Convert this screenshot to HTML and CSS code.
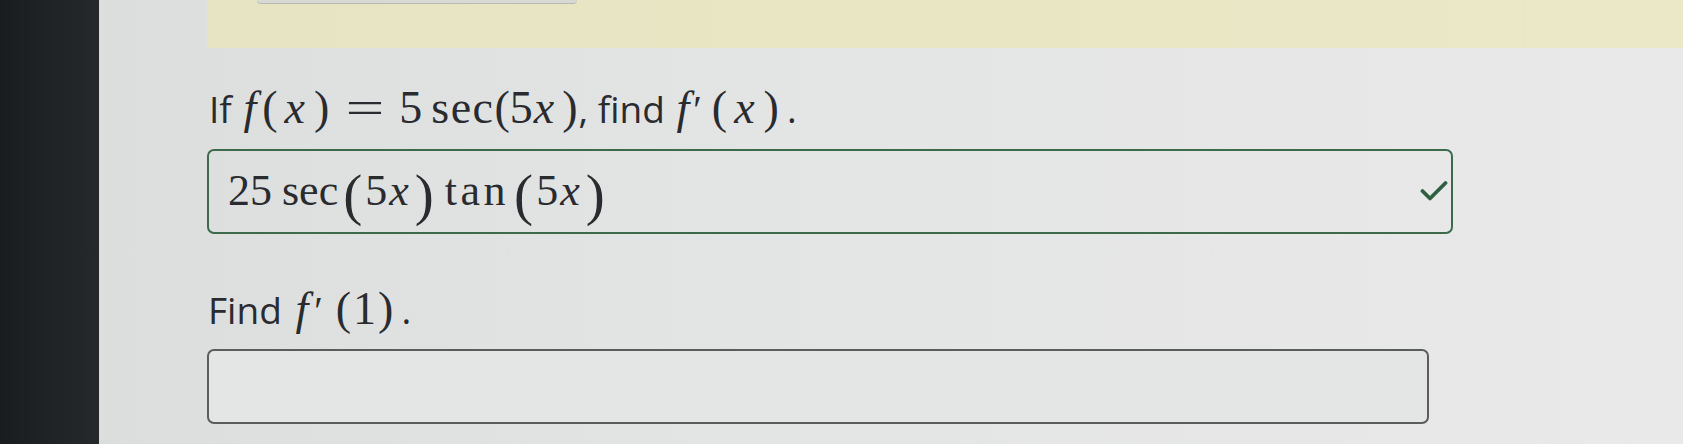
FILE: index.html
```html
<!DOCTYPE html>
<html lang="en">
<head>
<meta charset="utf-8">
<title>Derivative question</title>
<link rel="stylesheet" href="styles.css">
</head>
<body>
<div class="frame">
  <div class="bezel"></div>
  <main class="page">
    <div class="banner"><div class="tab"></div></div>
    <div class="content">
      <p class="q q1">If <span class="m m-first"><i class="fn">f</i>(<i class="xa">x</i>)<span class="rel">=</span>5<span class="op">sec</span>(5<i class="xb">x</i>)</span>, find <span class="m"><i class="fn2">f</i><span class="pr">′</span>(<i class="xa">x</i>)</span>.</p>
      <div class="answer correct">
        <span class="m ans">25<span class="op op2">sec</span><span class="pl">(</span><span class="d5">5</span><i class="xc">x</i><span class="pl pr2">)</span><span class="op op3">tan</span><span class="pl">(</span><span class="d5">5</span><i class="xc">x</i><span class="pl pr2">)</span></span>
        <svg class="check" viewBox="0 0 28 22" width="28" height="22" aria-hidden="true">
          <path d="M2.5 11 L10 18.5 L25.5 3" fill="none" stroke="#2f5f40" stroke-width="3.8" stroke-linecap="round" stroke-linejoin="round"/>
        </svg>
      </div>
      <p class="q q2">Find <span class="m"><i class="fn2 fn3">f</i><span class="pr pr-b">′</span>(<span class="one">1</span>)</span>.</p>
      <div class="answer empty"></div>
    </div>
  </main>
</div>
</body>
</html>
```

FILE: styles.css
```css
html, body {
  margin: 0;
  padding: 0;
  height: 100%;
}

body {
  background: #e1e3e2;
  overflow: hidden;
}

.frame {
  display: flex;
  height: 444px;
}

.bezel {
  width: 99px;
  flex: none;
  background: linear-gradient(90deg, #1a1d20 0%, #25292c 100%);
}

.page {
  flex: 1;
  background: linear-gradient(90deg, #dcdedd 0%, #e3e5e4 40%, #e8e9e8 100%);
}

.banner {
  margin-left: 108px;
  height: 48px;
  background: linear-gradient(90deg, #e6e4c2 0%, #e9e6c4 50%, #ebe8c7 100%);
}

.tab {
  margin-left: 50px;
  width: 320px;
  height: 3px;
  background: #d8d9d4;
  border-bottom: 1px solid #b9bab6;
  border-radius: 0 0 6px 6px;
}

.content {
  padding-left: 108px;
  color: #2a2b2f;
}

.q {
  margin: 0;
  height: 50px;
  line-height: 50px;
  font-family: "Open Sans", "Liberation Sans", sans-serif;
  font-size: 37px;
  white-space: nowrap;
}

.q1 {
  margin-top: 36px;
  padding-left: 2px;
}

.q2 {
  margin-top: 51px;
  padding-left: 1px;
}

.m {
  font-family: "Liberation Serif", "DejaVu Serif", serif;
  font-size: 46px;
  line-height: 1;
  margin-right: 8px;
}

.m-first {
  margin-right: 1px;
}

.m i {
  font-style: italic;
}

.fn {
  margin-left: 2px;
  margin-right: 6px;
}

.fn2 {
  margin-left: 2px;
  margin-right: 4px;
}

.fn3 {
  margin-left: 4px;
  margin-right: 6px;
}

.xa {
  margin: 0 9px 0 7px;
}

.xb {
  margin: 0 8px 0 1px;
}

.rel {
  display: inline-block;
  width: 38px;
  margin: 0 15px 0 17px;
  text-align: center;
  transform: scaleX(1.5);
}

.op {
  margin-left: 9px;
  letter-spacing: 1.5px;
}

.pr {
  font-size: 0.85em;
  margin-right: 10px;
}

.pr-b {
  margin-right: 13px;
}

.one {
  margin: 0 2px;
}

.answer {
  box-sizing: border-box;
  display: flex;
  align-items: center;
  border-radius: 7px;
}

.correct {
  margin-top: 15px;
  width: 1246px;
  height: 85px;
  border: 2px solid #3d6a4a;
  padding: 0 0 1px 19px;
}

.ans {
  font-size: 44px;
  line-height: 1;
  margin-right: 0;
}

.op2 {
  margin-left: 10px;
  letter-spacing: 0;
}

.op3 {
  margin-left: 11px;
  letter-spacing: 3.5px;
}

.pl {
  font-size: 1.3em;
  line-height: 0;
  vertical-align: -0.16em;
  margin-left: 5px;
}

.d5 {
  margin-left: 3px;
}

.xc {
  margin-left: 2px;
}

.pr2 {
  margin-left: 6px;
}

.check {
  margin-left: auto;
  margin-right: 3px;
}

.empty {
  margin-top: 14px;
  width: 1222px;
  height: 75px;
  border: 2px solid #5a5c5d;
  background: #e4e6e5;
}
```
